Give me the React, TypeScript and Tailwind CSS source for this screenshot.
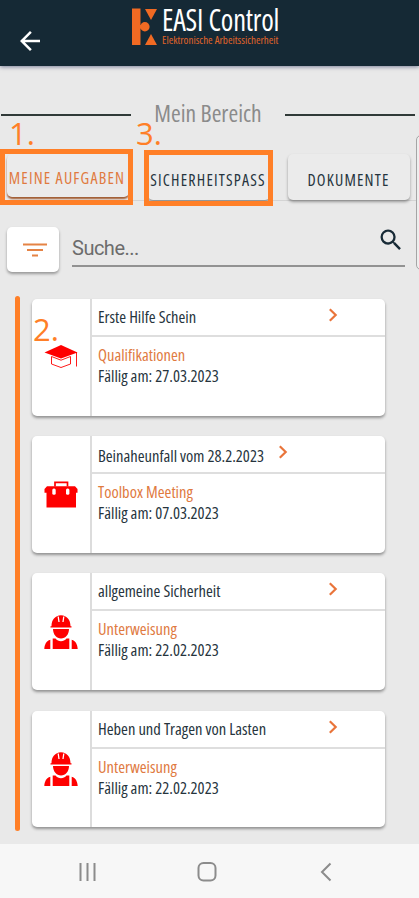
import * as React from "react";
import { clsx } from "clsx";
import { MdArrowBack, MdSearch } from "react-icons/md";

const CONDENSED = "font-['Open_Sans',sans-serif] [font-stretch:75%] whitespace-nowrap";

type TaskKind = "qualification" | "toolbox" | "instruction";

interface Task {
  title: string;
  category: string;
  due: string;
  kind: TaskKind;
  // Long incident titles sit a little lower, with the chevron right behind them
  compact?: boolean;
}

const TASKS: Task[] = [
  { title: "Erste Hilfe Schein", category: "Qualifikationen", due: "27.03.2023", kind: "qualification" },
  { title: "Beinaheunfall vom 28.2.2023", category: "Toolbox Meeting", due: "07.03.2023", kind: "toolbox", compact: true },
  { title: "allgemeine Sicherheit", category: "Unterweisung", due: "22.02.2023", kind: "instruction" },
  { title: "Heben und Tragen von Lasten", category: "Unterweisung", due: "22.02.2023", kind: "instruction" },
];

function Logo() {
  return (
    <svg width="26" height="38" viewBox="0 0 26 38" fill="#f06a23">
      <path d="M0 .5h8.500V37H0z" />
      <path d="M8 17h3v3.500H8z" />
      <circle cx="12.900" cy="18.700" r="4.700" />
      <path d="M13 1h12l-6 11z" />
      <path d="M13 37h12l-6-11z" />
    </svg>
  );
}

function TaskIcon({ kind }: { kind: TaskKind }) {
  if (kind === "qualification") {
    return (
      <svg width="34" height="34" viewBox="0 0 34 34" className="text-[#fe0000]">
        <path d="M.5 12.500 17 5l16.500 7.500L17 18.500z" fill="currentColor" />
        <path d="M7.500 16.500v7.500l9.500 3.500 9.500-3.500v-7.500L17 20.200z" fill="none" stroke="currentColor" strokeWidth=".9" />
        <path d="M32.500 12v14.500" stroke="currentColor" strokeWidth=".9" />
      </svg>
    );
  }
  if (kind === "toolbox") {
    return (
      <svg width="34" height="34" viewBox="0 0 34 34" fill="#fe0000">
        <path d="M11 9.500V5.300h12.500v4.200" fill="none" stroke="#fe0000" strokeWidth="1.700" />
        <path d="M3 9.300h28l2.500 2.700v3.800H.5V12z" />
        <path d="M2.500 15h29.500v15.500H2.500z" />
        <rect x="8.300" y="11.500" width="3.400" height="6.200" rx="1.500" fill="#fff" />
        <rect x="22" y="11.500" width="3.400" height="6.200" rx="1.500" fill="#fff" />
      </svg>
    );
  }
  return (
    <svg width="34" height="34" viewBox="0 0 34 34" fill="#fe0000">
      <path d="M6.500 12.500v-1.300h1C7.500 5 11 .5 17 .3c6 .2 9.500 4.700 9.500 10.900h1v1.300z" />
      <path d="M14.200 1.500l.8 5.500M19.800 1.500l-.8 5.500" stroke="#fff" strokeWidth="1.300" />
      <path d="M9 14h16c0 5.500-3.500 9.500-8 9.500S9 19.500 9 14z" />
      <path d="M8.700 23.500h2.800c1.500 2 3.300 2.700 5.500 2.700s4-.7 5.500-2.700h2.800V34H8.700z" />
      <path d="M6.300 24.800V34H.3c.3-4.500 2-8 6-9.200zM27.700 24.800V34h6c-.3-4.500-2-8-6-9.200z" />
    </svg>
  );
}

function Chevron() {
  return (
    <svg width="9" height="14" viewBox="0 0 9 14" fill="none" stroke="#e9743a" strokeWidth="2.200" className="shrink-0">
      <path d="M.8 1.200 6.700 7 .8 12.800" />
    </svg>
  );
}

function TaskCard({ task }: { task: Task }) {
  return (
    <article className="flex h-[116.500px] rounded-[5px] bg-white shadow-[0_2px_3px_rgba(0,0,0,0.38)]">
      <div className="flex w-[60px] shrink-0 items-center justify-center border-r-2 border-[#dcdcdc]">
        <TaskIcon kind={task.kind} />
      </div>
      <div className={clsx("flex-1 text-[16.500px] text-[#26343d]", CONDENSED)}>
        <div className="flex h-[38px] border-b-2 border-[#dedede] pl-[6px]">
          <span className={clsx("leading-[22px]", task.compact ? "w-[181px] pt-[9px]" : "w-[231px] pt-[7px]")}>
            {task.title}
          </span>
          <span className="pt-[9px]">
            <Chevron />
          </span>
        </div>
        <div className="pt-[7px] pl-[6px] leading-[21px]">
          <p className="text-[#e07a3f]">{task.category}</p>
          <p>Fällig am: {task.due}</p>
        </div>
      </div>
    </article>
  );
}

function Tab({ label, active }: { label: string; active?: boolean }) {
  return (
    <button
      type="button"
      className={clsx(
        "w-[122px] rounded-[5px] bg-[#ebebeb] text-base",
        CONDENSED,
        active
          ? "h-[43px] pt-[5px] pr-[2px] tracking-[1.200px] text-[#e07a3f] shadow-[0_2px_2px_#a05a30]"
          : "h-[46px] pt-[6px] pr-px tracking-[1.200px] text-[#26343d] shadow-[0_2px_3px_rgba(0,0,0,0.35)]",
      )}
    >
      {label}
    </button>
  );
}

// Numbered orange markers that explain the parts of the screen
function Callouts() {
  const number = "absolute font-['Open_Sans',sans-serif] text-[31px] leading-none font-medium text-[#ff7f27]";
  return (
    <div className="pointer-events-none">
      <div className="absolute top-[149px] left-0 h-[56px] w-[133px] border-[5px] border-[#ff7f27]" />
      <div className="absolute top-[150px] left-[144px] h-[56px] w-[129px] border-[5px] border-[#ff7f27]" />
      <div className="absolute top-[296px] left-[15px] h-[535px] w-[5px] rounded-full bg-[#ff7f27]" />
      <span className={clsx(number, "top-[118px] left-[9px]")}>1.</span>
      <span className={clsx(number, "top-[118px] left-[136px]")}>3.</span>
      <span className={clsx(number, "top-[314px] left-[33px]")}>2.</span>
    </div>
  );
}

export default function App() {
  return (
    <div className="relative flex h-[898px] w-[419px] flex-col overflow-hidden bg-[#e9e9e9]">
      <header className="flex h-[66px] shrink-0 bg-[#152935] shadow-[0_1px_4px_rgba(20,30,80,0.5)]">
        <MdArrowBack className="mt-[26px] ml-[15px] size-[30px] shrink-0 text-white" />
        <div className="mt-[8px] ml-[87px] flex gap-[4px]">
          <Logo />
          <div className={CONDENSED}>
            <div className="mt-[-2px] h-[27px] w-[124px] origin-left scale-x-[0.95] text-[30px] leading-[28px] font-medium tracking-[-0.200px] text-white">
              EASI Control
            </div>
            <div className="text-[11px] leading-[13px] font-medium text-[#e0642a]">Elektronische Arbeitssicherheit</div>
          </div>
        </div>
      </header>

      <div className="mt-[29px] flex h-[40px] shrink-0 items-center justify-between pr-[4px] pl-px">
        <div className="h-[2px] w-[130px] bg-[#303a38]" />
        <h1 className={clsx("pb-[3px] text-[23.500px] text-[#8b8b8b]", CONDENSED)}>Mein Bereich</h1>
        <div className="h-[2px] w-[130px] bg-[#303a38]" />
      </div>

      <nav className="mt-[19px] flex h-[47px] shrink-0 gap-[18.500px] border-b border-[#d4d4d4] pl-[7px]">
        <Tab label="MEINE AUFGABEN" active />
        <Tab label="SICHERHEITSPASS" />
        <Tab label="DOKUMENTE" />
      </nav>

      <div className="mt-[26px] flex h-[45px] shrink-0">
        <button
          type="button"
          aria-label="Filter"
          className="ml-[7px] flex w-[52px] items-center justify-center rounded-[5px] bg-white shadow-[0_2px_3px_rgba(0,0,0,0.35)]"
        >
          <svg width="24" height="14" viewBox="0 0 24 14" stroke="#e58345" strokeWidth="1.800" className="ml-[4px]">
            <path d="M0 1.500h24M4 7h16M9 12.500h6" />
          </svg>
        </button>
        <div className="ml-[13px] flex h-[40px] w-[333px] justify-between border-b-2 border-[#929292]">
          <span className="pt-[8px] font-['Roboto',sans-serif] text-[20px] leading-[26px] tracking-[-0.500px] text-[#6c6c6c]">
            Suche...
          </span>
          <MdSearch className="mt-[-1px] size-[28px] text-[#172a36]" />
        </div>
      </div>

      <main className="mt-[27px] flex flex-1 flex-col gap-[20.700px] pr-[34px] pl-[32px]">
        {TASKS.map((task) => (
          <TaskCard key={task.title} task={task} />
        ))}
      </main>

      <footer className="flex h-[54px] shrink-0 items-center bg-[#f7f7f7] text-[#8c8c8c]">
        <svg width="419" height="54" viewBox="0 0 419 54" fill="none" stroke="currentColor" strokeWidth="2">
          <path d="M80.500 19v18M87.500 19v18M94.500 19v18" />
          <rect x="198.500" y="19" width="17" height="17.500" rx="5" />
          <path d="m330.500 19.500-8.500 8.500 8.500 8.500" />
        </svg>
      </footer>

      {/* Edge panel handle */}
      <div className="absolute top-[135px] left-[416px] h-[135px] w-[10px] rounded-[5px] border border-[#a5a5a5] bg-[#eeeeee]" />
      <Callouts />
    </div>
  );
}
